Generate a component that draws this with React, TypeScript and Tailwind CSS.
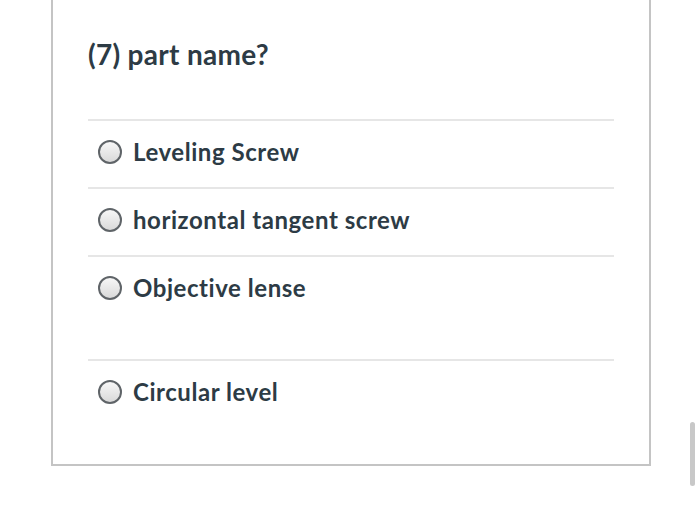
const options = [
  { label: "Leveling Screw", h: "h-[68px]" },
  { label: "horizontal tangent screw", h: "h-[68px]" },
  { label: "Objective lense", h: "h-[104px]" },
  { label: "Circular level", h: "h-[104px]" },
];

function Radio() {
  return (
    <span className="w-[24px] h-[24px] rounded-full border-2 border-[#5f6468] bg-gradient-to-b from-[#f7f7f7] to-[#d9d9d9] shrink-0" />
  );
}

export default function App() {
  return (
    <div className="relative w-[700px] h-[522px] bg-white overflow-hidden font-['Lato','Open_Sans',sans-serif] text-[#2d3b45]">
      <div className="ml-[51px] w-[600px] h-[466px] border-x-2 border-b-2 border-[#c4c4c4] px-[35px]">
        <div className="h-[119px] pt-[35px]">
          <h1 className="text-[28px] font-bold leading-[38px] tracking-[0.3px]">(7) part name?</h1>
        </div>
        {options.map((o, i) => (
          <div key={i} className={`border-t-2 border-[#e6e6e6] ${o.h}`}>
            <label className="flex items-center gap-[11px] pl-[10px] h-[62px]">
              <Radio />
              <span className="text-[24px] font-bold leading-none tracking-[0.55px]">{o.label}</span>
            </label>
          </div>
        ))}
      </div>
      <div className="absolute left-[690px] top-[422px] w-[5px] h-[64px] rounded-full bg-[#c8c8c8]" />
    </div>
  );
}
